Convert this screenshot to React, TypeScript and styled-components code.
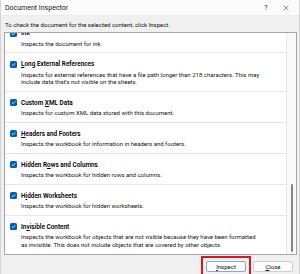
import React from "react";
import styled, { createGlobalStyle } from "styled-components";

const GlobalStyle = createGlobalStyle`
  html, body {
    margin: 0;
    padding: 0;
    background: #f0f0f0;
  }
  body {
    font-family: Roboto, "Liberation Sans", sans-serif;
    color: #1a1a1a;
  }
`;

type Item = {
  label: React.ReactNode;
  lines: string[];
};

const Window = styled.div`
  width: 300px;
  height: 274px;
  box-sizing: border-box;
  display: flex;
  flex-direction: column;
  background: #f0f0f0;
  border-left: 1px solid #d4d4d4;
  border-right: 1px solid #d4d4d4;
`;

const TitleBar = styled.div`
  height: 15px;
  flex-shrink: 0;
  display: flex;
  align-items: center;
  padding-left: 4px;
  background: #fbfbfb;
  border-bottom: 1px solid #ececec;
`;

const Title = styled.span`
  font-size: 7px;
  color: #1a1a1a;
  flex: 1;
`;

const Help = styled.span`
  font-size: 7px;
  color: #333;
  width: 10px;
  text-align: center;
  margin-right: 12px;
`;

const CloseX = styled.svg`
  width: 6px;
  height: 6px;
  margin-right: 10px;
`;

const Intro = styled.div`
  height: 15px;
  flex-shrink: 0;
  display: flex;
  align-items: center;
  padding: 1px 0 0 4px;
  font-size: 6px;
  color: #111;
`;

const Panel = styled.div`
  height: 221px;
  flex-shrink: 0;
  margin: 0 2px 0 3px;
  border: 1px solid #a6a6a6;
  background: #fff;
  display: flex;
`;

const Viewport = styled.div`
  flex: 1;
  overflow: hidden;
  display: flex;
  flex-direction: column;
  justify-content: flex-end;
`;

const Row = styled.div<{ $last?: boolean }>`
  flex-shrink: 0;
  padding: 6px 0 ${(p) => (p.$last ? "6px" : "5px")} 5px;
  border-bottom: ${(p) => (p.$last ? "none" : "1px solid #e6e6e6")};
`;

const Head = styled.div`
  display: flex;
  align-items: center;
  gap: 4px;
  height: 10px;
`;

const Check = styled.span`
  width: 7px;
  height: 7px;
  border-radius: 1.5px;
  background: #005fb8;
  display: flex;
  align-items: center;
  justify-content: center;
`;

const Label = styled.span`
  font-size: 6.4px;
  font-weight: 600;
  color: #000;
`;

const Desc = styled.div`
  margin-top: 1.5px;
  padding-left: 11px;
  font-size: 6px;
  line-height: 7.5px;
  color: #141414;
  & + & {
    margin-top: 0;
  }
`;

const Track = styled.div`
  width: 9px;
  flex-shrink: 0;
  border-left: 1px solid #e8e8e8;
  background: #f9f9f9;
  display: flex;
  flex-direction: column;
  justify-content: flex-end;
  align-items: center;
  padding-bottom: 2px;
`;

const Thumb = styled.div`
  width: 2px;
  height: 68px;
  border-radius: 1px;
  background: #858585;
`;

const Buttons = styled.div`
  flex: 1;
  display: flex;
  justify-content: flex-end;
  align-items: center;
  gap: 2px;
  padding: 1px 6px 0 0;
`;

const Highlight = styled.div`
  border: 2px solid #e3131b;
  padding: 3px 3px 2px 3px;
  display: flex;
`;

const Button = styled.button<{ $primary?: boolean }>`
  width: 40px;
  height: 11px;
  padding: 0;
  font-family: inherit;
  font-size: 6px;
  color: #111;
  background: #fdfdfd;
  border: 1px solid ${(p) => (p.$primary ? "#86a9cf" : "#cfcfcf")};
  border-radius: 2px;
  display: flex;
  align-items: center;
  justify-content: center;
`;

const Key = styled.u`
  text-decoration-thickness: 0.5px;
  text-underline-offset: 1px;
`;

const items: Item[] = [
  { label: <>Ink</>, lines: ["Inspects the document for ink."] },
  {
    label: (
      <>
        <Key>L</Key>ong External References
      </>
    ),
    lines: [
      "Inspects for external references that have a file path longer than 218 characters. This may",
      "include data that\u2019s not visible on the sheets.",
    ],
  },
  {
    label: (
      <>
        Custom <Key>X</Key>ML Data
      </>
    ),
    lines: ["Inspects for custom XML data stored with this document."],
  },
  {
    label: (
      <>
        <Key>H</Key>eaders and Footers
      </>
    ),
    lines: ["Inspects the workbook for information in headers and footers."],
  },
  {
    label: (
      <>
        Hidden R<Key>o</Key>ws and Columns
      </>
    ),
    lines: ["Inspects the workbook for hidden rows and columns."],
  },
  {
    label: (
      <>
        H<Key>i</Key>dden Worksheets
      </>
    ),
    lines: ["Inspects the workbook for hidden worksheets."],
  },
  {
    label: (
      <>
        In<Key>v</Key>isible Content
      </>
    ),
    lines: [
      "Inspects the workbook for objects that are not visible because they have been formatted",
      "as invisible. This does not include objects that are covered by other objects.",
    ],
  },
];

function CheckMark() {
  return (
    <svg width="5" height="5" viewBox="0 0 10 10">
      <path d="M1.8 5.2 L4 7.4 L8.4 2.8" fill="none" stroke="#fff" strokeWidth="1.6" />
    </svg>
  );
}

export default function App() {
  return (
    <>
      <GlobalStyle />
      <Window>
        <TitleBar>
          <Title>Document Inspector</Title>
          <Help>?</Help>
          <CloseX viewBox="0 0 10 10">
            <path d="M1 1 L9 9 M9 1 L1 9" stroke="#333" strokeWidth="0.9" />
          </CloseX>
        </TitleBar>
        <Intro>To check the document for the selected content, click Inspect.</Intro>
        <Panel>
          <Viewport>
            {items.map((item, idx) => (
              <Row key={idx} $last={idx === items.length - 1}>
                <Head>
                  <Check>
                    <CheckMark />
                  </Check>
                  <Label>{item.label}</Label>
                </Head>
                {item.lines.map((line) => (
                  <Desc key={line}>{line}</Desc>
                ))}
              </Row>
            ))}
          </Viewport>
          <Track>
            <Thumb />
          </Track>
        </Panel>
        <Buttons>
          <Highlight>
            <Button $primary>
              <span>
                <Key>I</Key>nspect
              </span>
            </Button>
          </Highlight>
          <Button>
            <span>
              <Key>C</Key>lose
            </span>
          </Button>
        </Buttons>
      </Window>
    </>
  );
}
